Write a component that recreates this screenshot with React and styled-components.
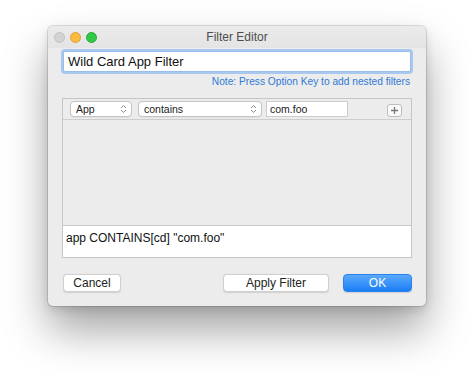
import React from "react";
import styled, { createGlobalStyle } from "styled-components";

const Global = createGlobalStyle`
  html, body { margin: 0; padding: 0; background: #fff; }
  body { font-family: "Liberation Sans", Arial, sans-serif; }
`;

const Page = styled.div`
  width: 474px;
  height: 374px;
  padding: 26px 0 0 48px;
  box-sizing: border-box;
`;

const Window = styled.div`
  width: 378px;
  height: 280px;
  background: #ececec;
  border-radius: 5px;
  box-shadow: 0 0 0 1px rgba(0,0,0,0.12), 0 24px 44px rgba(0,0,0,0.36), 0 4px 10px rgba(0,0,0,0.12);
  display: flex;
  flex-direction: column;
  overflow: hidden;
`;

const TitleBar = styled.div`
  height: 22px;
  display: flex;
  align-items: center;
  position: relative;
  background: linear-gradient(#ebebeb, #e4e4e4);
  flex: none;
`;

const Lights = styled.div`
  display: flex;
  gap: 5px;
  padding-left: 6px;
`;

const Light = styled.span`
  width: 11px;
  height: 11px;
  border-radius: 50%;
  background: ${p => p.$c};
  border: 0.5px solid ${p => p.$b};
  box-sizing: border-box;
`;

const Title = styled.div`
  position: absolute;
  left: 0;
  right: 0;
  text-align: center;
  font-size: 12px;
  color: #4d4d4d;
  pointer-events: none;
`;

const Content = styled.div`
  flex: 1;
  display: flex;
  flex-direction: column;
  padding: 2px 14px 0 14px;
`;

const NameField = styled.div`
  height: 21px;
  background: #fff;
  border: 1px solid #9bbde9;
  box-shadow: 0 0 0 2px #a9c8ef;
  border-radius: 2px;
  margin: 1px 1px 0 1px;
  display: flex;
  align-items: center;
  padding-left: 4px;
  font-size: 13px;
  color: #111;
  box-sizing: border-box;
`;

const Note = styled.div`
  text-align: right;
  font-size: 10.2px;
  color: #2f7ad6;
  margin-top: 3px;
  padding-right: 2px;
  line-height: 13px;
`;

const Panel = styled.div`
  margin-top: 10px;
  height: 160px;
  border: 1px solid #c6c6c6;
  display: flex;
  flex-direction: column;
  box-sizing: border-box;
`;

const Row = styled.div`
  height: 21px;
  border-bottom: 1px solid #cdcdcd;
  display: flex;
  align-items: center;
  padding: 0 9px 0 7px;
  gap: 6px;
  box-sizing: border-box;
  flex: none;
`;

const Popup = styled.div`
  width: ${p => p.$w}px;
  height: 16px;
  background: #fff;
  border: 1px solid #c4c4c4;
  border-radius: 4px;
  display: flex;
  align-items: center;
  justify-content: space-between;
  padding: 0 4px 0 5px;
  font-size: 10.5px;
  color: #222;
  box-sizing: border-box;
  box-shadow: 0 0.5px 0 rgba(0,0,0,0.08);
`;

const TextBox = styled.div`
  width: 82px;
  height: 16px;
  margin-left: -2px;
  background: #fff;
  border: 1px solid #cdcdcd;
  display: flex;
  align-items: center;
  padding-left: 3px;
  font-size: 10.5px;
  color: #222;
  box-sizing: border-box;
`;

const Spacer = styled.div`
  flex: 1;
`;

const PlusButton = styled.div`
  width: 15px;
  height: 13px;
  margin-top: 2px;
  background: #fafafa;
  border: 1px solid #bdbdbd;
  border-radius: 3px;
  display: flex;
  align-items: center;
  justify-content: center;
  box-sizing: border-box;
`;

const Empty = styled.div`
  flex: 1;
  border-bottom: 1px solid #c8c8c8;
`;

const Predicate = styled.div`
  height: 31px;
  background: #fff;
  font-size: 12px;
  color: #111;
  padding: 5px 0 0 3px;
  box-sizing: border-box;
  flex: none;
`;

const Buttons = styled.div`
  display: flex;
  align-items: center;
  margin-top: 16px;
  gap: 14px;
`;

const Button = styled.div`
  width: ${p => p.$w}px;
  height: 18px;
  border-radius: 4px;
  display: flex;
  align-items: center;
  justify-content: center;
  font-size: 12px;
  box-sizing: border-box;
  margin-left: ${p => p.$ml || 0}px;
  background: ${p => p.$primary ? "linear-gradient(#5aa9fb, #1b7ef6)" : "#fff"};
  color: ${p => p.$primary ? "#fff" : "#222"};
  border: 1px solid ${p => p.$primary ? "#2a82ee" : "#d0d0d0"};
  box-shadow: 0 0.5px 1px rgba(0,0,0,0.12);
`;

function Chevrons() {
  return (
    <svg width="7" height="10" viewBox="0 0 7 10">
      <path d="M1 4 L3.5 1.5 L6 4 M1 6 L3.5 8.5 L6 6" fill="none" stroke="#8a8a8a" strokeWidth="1" />
    </svg>
  );
}

export default function App() {
  return (
    <Page>
      <Global />
      <Window>
        <TitleBar>
          <Lights>
            <Light $c="#d3d3d3" $b="#c2c2c2" />
            <Light $c="#fdbc40" $b="#dea036" />
            <Light $c="#34c84a" $b="#27aa35" />
          </Lights>
          <Title>Filter Editor</Title>
        </TitleBar>
        <Content>
          <NameField>Wild Card App Filter</NameField>
          <Note>Note: Press Option Key to add nested filters</Note>
          <Panel>
            <Row>
              <Popup $w={62}>App<Chevrons /></Popup>
              <Popup $w={124}>contains<Chevrons /></Popup>
              <TextBox>com.foo</TextBox>
              <Spacer />
              <PlusButton>
                <svg width="9" height="9" viewBox="0 0 9 9">
                  <path d="M4.5 1 V8 M1 4.5 H8" stroke="#777" strokeWidth="1.3" />
                </svg>
              </PlusButton>
            </Row>
            <Empty />
            <Predicate>app CONTAINS[cd] "com.foo"</Predicate>
          </Panel>
          <Buttons>
            <Button $w={58} $ml={1}>Cancel</Button>
            <Spacer />
            <Button $w={106}>Apply Filter</Button>
            <Button $w={69} $primary>OK</Button>
          </Buttons>
        </Content>
      </Window>
    </Page>
  );
}
